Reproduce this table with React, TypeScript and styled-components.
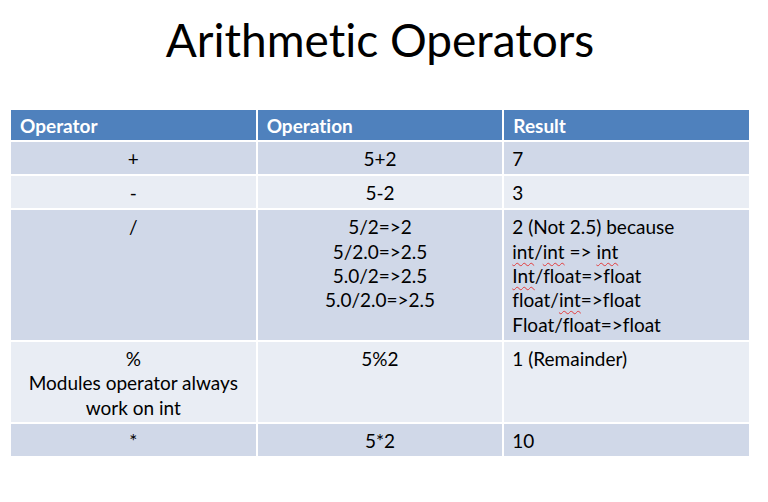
import React from 'react';
import styled, { createGlobalStyle } from 'styled-components';

const GlobalStyle = createGlobalStyle`
    html, body {
        margin: 0;
        padding: 0;
        background: #ffffff;
    }
    body {
        font-family: Lato, "Noto Sans", "Liberation Sans", sans-serif;
        font-variant-ligatures: none;
        color: #000;
    }
`

const Slide = styled.div`
    width: 760px;
    height: 502px;
    display: flex;
    flex-direction: column;
    align-items: center;
`

const Title = styled.h1`
    margin: 12px 0 0 0;
    font-size: 46px;
    line-height: 56px;
    font-weight: 400;
`

const Table = styled.table`
    margin-top: 40px;
    width: 742px;
    border-collapse: collapse;
    table-layout: fixed;
    font-size: 19px;
    line-height: 24.4px;
`

const HeadCell = styled.th`
    background: #4f81bd;
    color: #fff;
    font-weight: 700;
    text-align: left;
    padding: 4px 9px 2px;
    border: 2px solid #fff;
`

const Row = styled.tr<{ $dark: boolean }>`
    background: ${p => p.$dark ? '#d0d8e8' : '#e9edf4'};
`

const Cell = styled.td<{ $align?: 'left' | 'center' }>`
    text-align: ${p => p.$align || 'left'};
    vertical-align: top;
    padding: 5px 8px 2.5px;
    border: 2px solid #fff;
`

const Line = styled.div``

const Misspelled = styled.span`
    text-decoration: underline wavy #e23b3b;
    text-decoration-thickness: 1px;
    text-underline-offset: 3px;
`

type RowData = {
    operator: React.ReactNode[];
    operation: React.ReactNode[];
    result: React.ReactNode[];
};

const rows: RowData[] = [
    { operator: ['+'], operation: ['5+2'], result: ['7'] },
    { operator: ['-'], operation: ['5-2'], result: ['3'] },
    {
        operator: ['/'],
        operation: ['5/2=>2', '5/2.0=>2.5', '5.0/2=>2.5', '5.0/2.0=>2.5'],
        result: [
            '2 (Not 2.5) because',
            <><Misspelled>int</Misspelled>/<Misspelled>int</Misspelled> =&gt; <Misspelled>int</Misspelled></>,
            <><Misspelled>Int</Misspelled>/float=&gt;float</>,
            <>float/<Misspelled>int</Misspelled>=&gt;float</>,
            'Float/float=>float',
        ],
    },
    {
        operator: ['%', 'Modules operator always', 'work on int'],
        operation: ['5%2'],
        result: ['1 (Remainder)'],
    },
    { operator: ['*'], operation: ['5*2'], result: ['10'] },
];

function Lines({ items }: { items: React.ReactNode[] }): JSX.Element {
    return (
        <>
            {items.map((item, i) => <Line key={i}>{item}</Line>)}
        </>
    );
}

function App(): JSX.Element {
    return (
        <Slide>
            <GlobalStyle />
            <Title>Arithmetic Operators</Title>
            <Table>
                <thead>
                    <tr>
                        <HeadCell>Operator</HeadCell>
                        <HeadCell>Operation</HeadCell>
                        <HeadCell>Result</HeadCell>
                    </tr>
                </thead>
                <tbody>
                    {rows.map((r, i) => (
                        <Row key={i} $dark={i % 2 === 0}>
                            <Cell $align="center"><Lines items={r.operator} /></Cell>
                            <Cell $align="center"><Lines items={r.operation} /></Cell>
                            <Cell><Lines items={r.result} /></Cell>
                        </Row>
                    ))}
                </tbody>
            </Table>
        </Slide>
    );
}

export default App
